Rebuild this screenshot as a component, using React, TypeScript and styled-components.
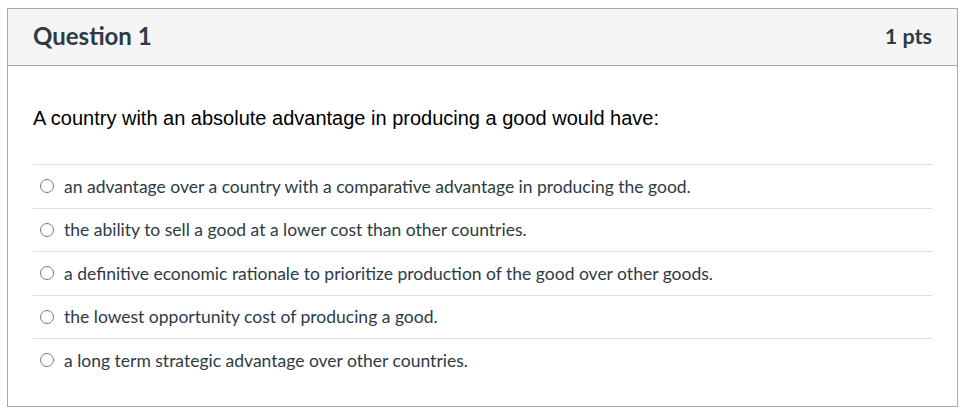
import React from "react";
import styled, { createGlobalStyle } from "styled-components";

const Global = createGlobalStyle`
  html, body { margin: 0; padding: 0; background: #fff; }
  body { font-family: Lato, "Liberation Sans", sans-serif; }
`;

const Page = styled.div`
  padding: 8px 6px 0 7px;
`;

const Card = styled.div`
  box-sizing: border-box;
  width: 951px;
  height: 399px;
  border: 1px solid #a8a8a8;
  background: #fff;
  display: flex;
  flex-direction: column;
`;

const Header = styled.div`
  box-sizing: border-box;
  height: 57px;
  background: #f5f5f5;
  border-bottom: 1px solid #a8a8a8;
  display: flex;
  align-items: center;
  justify-content: space-between;
  padding: 0 25px 3px;
  color: #2d3b45;
  font-family: Lato, sans-serif;
  font-weight: 700;
`;

const Title = styled.h2`
  margin: 0;
  font-size: 24px;
  font-weight: 700;
`;

const Points = styled.span`
  font-size: 21.5px;
  font-weight: 700;
`;

const Body = styled.div`
  padding: 39px 25px 24px;
`;

const Prompt = styled.p`
  margin: 0 0 32px;
  font-family: "Liberation Sans", Arial, sans-serif;
  font-size: 20px;
  line-height: 27px;
  color: #000;
`;

const Answers = styled.div`
  display: flex;
  flex-direction: column;
`;

const Answer = styled.label`
  box-sizing: border-box;
  height: 43.5px;
  border-top: 1px solid #dddddd;
  display: flex;
  align-items: center;
  gap: 10px;
  padding-left: 7px;
  font-family: Lato, sans-serif;
  font-size: 17.5px;
  color: #2d3b45;
`;

const Radio = styled.span`
  box-sizing: border-box;
  width: 14px;
  height: 14px;
  border-radius: 50%;
  border: 1px solid #7a7a7a;
  background: #fff;
  flex: none;
`;

const answers = [
  "an advantage over a country with a comparative advantage in producing the good.",
  "the ability to sell a good at a lower cost than other countries.",
  "a definitive economic rationale to prioritize production of the good over other goods.",
  "the lowest opportunity cost of producing a good.",
  "a long term strategic advantage over other countries.",
];

export default function App() {
  return (
    <Page>
      <Global />
      <Card>
        <Header>
          <Title>Question 1</Title>
          <Points>1 pts</Points>
        </Header>
        <Body>
          <Prompt>A country with an absolute advantage in producing a good would have:</Prompt>
          <Answers>
            {answers.map((a) => (
              <Answer key={a}>
                <Radio />
                {a}
              </Answer>
            ))}
          </Answers>
        </Body>
      </Card>
    </Page>
  );
}
